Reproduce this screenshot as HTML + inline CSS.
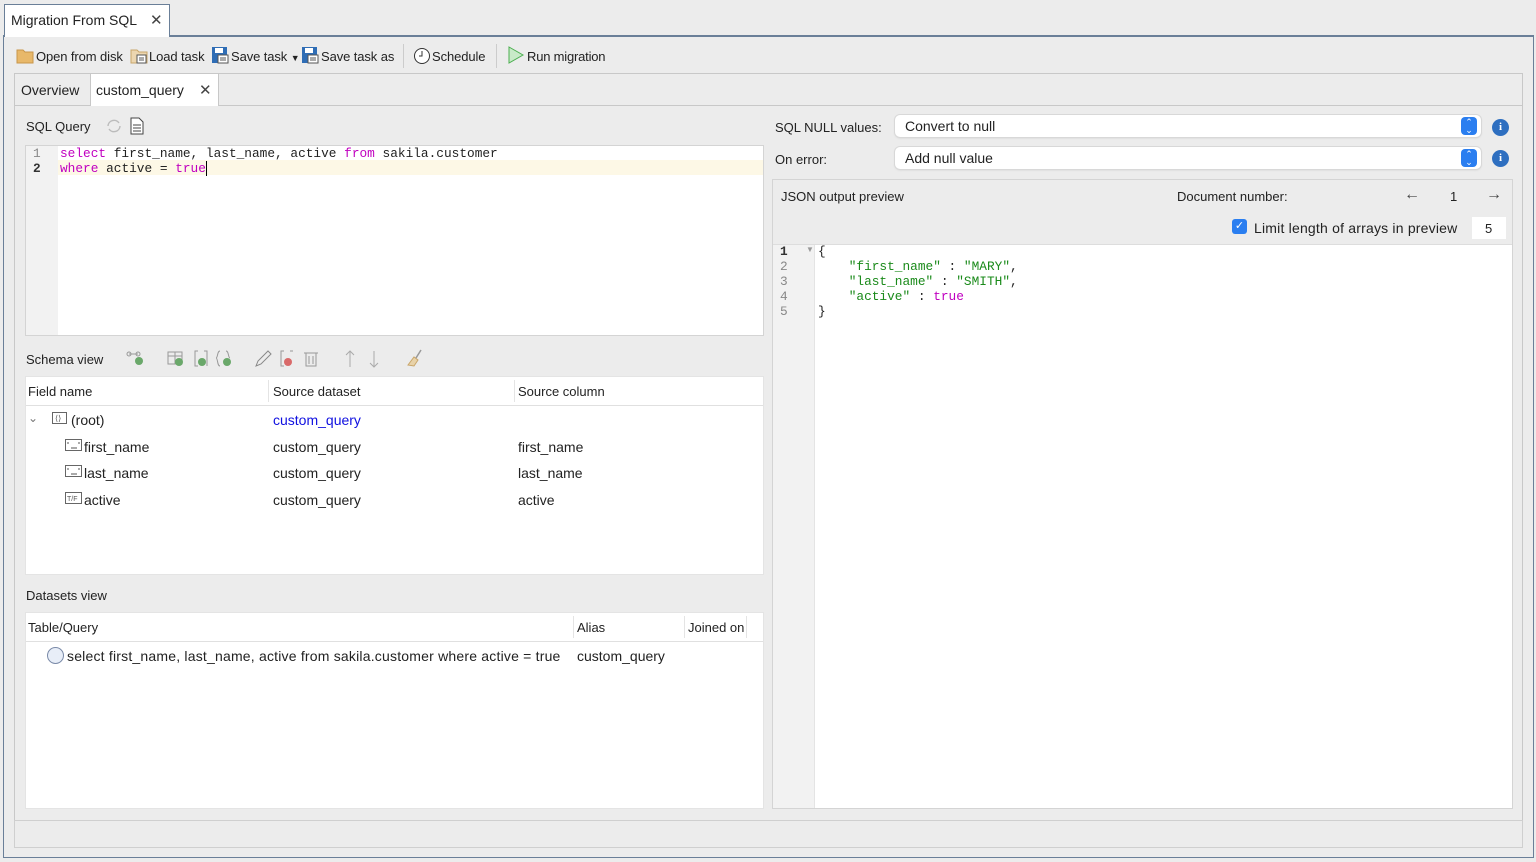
<!DOCTYPE html>
<html><head><meta charset="utf-8"><style>
*{box-sizing:border-box;margin:0;padding:0}
body{width:1536px;height:862px;background:#ececec;font-family:"Liberation Sans",sans-serif;font-size:13px;color:#222;position:relative;overflow:hidden}
.a{position:absolute}
.mono{font-family:"Liberation Mono",monospace;font-size:12.8px}
.w{background:#fff}
.t{white-space:nowrap}
.kw{color:#c000c0}
.str{color:#1a8a1a}
.gray{color:#888}
.ic{position:absolute}
</style></head><body>
<div class="a" style="left:3px;top:35px;width:1531px;height:823px;border:1px solid #6a7f98;border-top:2px solid #6a7f98"></div>
<div class="a" style="left:4px;top:4px;width:166px;height:33px;background:#fff;border:1px solid #6a7f98;border-bottom:none"></div>
<div class="a t" style="left:11px;top:12px;font-size:14px">Migration From SQL</div>
<div class="a t" style="left:150px;top:11px;font-size:15px;color:#444">✕</div>

<svg class="ic" style="left:16px;top:46px" width="18" height="18"><path d="M1 4h6l2 2h8v11H1z" fill="#e8b86a" stroke="#c9964a"/></svg>
<div class="a t" style="left:36px;top:49px;letter-spacing:-0.1px">Open from disk</div>
<svg class="ic" style="left:130px;top:46px" width="18" height="18"><path d="M1 4h6l2 2h8v11H1z" fill="#ecd6b0" stroke="#c9a66a"/><rect x="7" y="9" width="9" height="8" fill="#fff" stroke="#555"/><path d="M9 12h5M9 14h5" stroke="#555"/></svg>
<div class="a t" style="left:149px;top:49px;letter-spacing:-0.1px">Load task</div>
<svg class="ic" style="left:211px;top:46px" width="18" height="18"><rect x="1" y="1" width="15" height="16" fill="#2f6db5"/><rect x="4" y="2" width="8" height="5" fill="#fff"/><rect x="7" y="9" width="10" height="8" fill="#fff" stroke="#555"/><path d="M9 12h6M9 14h6" stroke="#555"/></svg>
<div class="a t" style="left:231px;top:49px;letter-spacing:-0.1px">Save task <span style="font-size:9px">▼</span></div>
<svg class="ic" style="left:301px;top:46px" width="18" height="18"><rect x="1" y="1" width="15" height="16" fill="#2f6db5"/><rect x="4" y="2" width="8" height="5" fill="#fff"/><rect x="7" y="9" width="10" height="8" fill="#fff" stroke="#555"/><path d="M9 12h6M9 14h6" stroke="#555"/></svg>
<div class="a t" style="left:321px;top:49px;letter-spacing:-0.1px">Save task as</div>
<div class="a" style="left:403px;top:44px;width:1px;height:24px;background:#ccc"></div>
<svg class="ic" style="left:413px;top:47px" width="18" height="18"><circle cx="9" cy="9" r="7.5" fill="#fff" stroke="#333"/><path d="M9 4v5H6" stroke="#333" fill="none"/></svg>
<div class="a t" style="left:432px;top:49px;letter-spacing:-0.1px">Schedule</div>
<div class="a" style="left:496px;top:44px;width:1px;height:24px;background:#ccc"></div>
<svg class="ic" style="left:507px;top:46px" width="18" height="18"><path d="M2 1l14 8-14 8z" fill="#c8eac8" stroke="#4caf50"/></svg>
<div class="a t" style="left:527px;top:49px;letter-spacing:-0.2px">Run migration</div>

<div class="a" style="left:14px;top:73px;width:1509px;height:748px;border:1px solid #c8c8c8"></div>
<div class="a" style="left:14px;top:820px;width:1509px;height:28px;border:1px solid #cfcfcf"></div>
<div class="a" style="left:14px;top:105px;width:1509px;height:1px;background:#c8c8c8"></div>
<div class="a" style="left:90px;top:74px;width:129px;height:32px;background:#fff;border-left:1px solid #c8c8c8;border-right:1px solid #c8c8c8"></div>
<div class="a t" style="left:21px;top:82px;font-size:14px">Overview</div>
<div class="a t" style="left:96px;top:82px;font-size:14px">custom_query</div>
<div class="a t" style="left:199px;top:81px;font-size:15px;color:#444">✕</div>

<div class="a t" style="left:26px;top:119px">SQL Query</div>
<svg class="ic" style="left:105px;top:117px" width="18" height="18"><path d="M3 9a6 6 0 0 1 11-3M15 9a6 6 0 0 1-11 3" stroke="#bbb" fill="none" stroke-width="1.4"/></svg>
<svg class="ic" style="left:129px;top:117px" width="16" height="18"><path d="M2 1h8l4 4v12H2z" fill="#fff" stroke="#444"/><path d="M4 8h8M4 11h8M4 14h8" stroke="#444"/></svg>
<div class="a w" style="left:25px;top:145px;width:739px;height:191px;border:1px solid #d4d4d4"></div>
<div class="a" style="left:26px;top:146px;width:32px;height:189px;background:#f2f2f2"></div>
<div class="a" style="left:58px;top:160px;width:705px;height:15px;background:#fdf8e6"></div>
<div class="a mono gray" style="left:33px;top:146px">1</div>
<div class="a mono" style="left:33px;top:161px;font-weight:bold;color:#333">2</div>
<div class="a mono t" style="left:60px;top:146px"><span class="kw">select</span> first_name, last_name, active <span class="kw">from</span> sakila.customer</div>
<div class="a mono t" style="left:60px;top:161px"><span class="kw">where</span> active = <span class="kw">true</span><span style="border-left:1px solid #000"></span></div>

<div class="a t" style="left:26px;top:352px">Schema view</div>
<svg class="ic" style="left:126px;top:349px" width="320" height="20" fill="none">
<path d="M3 5h9" stroke="#999"/><circle cx="3" cy="5" r="2" stroke="#999"/><circle cx="12" cy="5" r="2" stroke="#999"/><circle cx="13" cy="12" r="4" fill="#6aa86a"/>
<rect x="42" y="3" width="14" height="12" stroke="#999"/><path d="M42 7h14M49 3v12" stroke="#999"/><circle cx="53" cy="13" r="4" fill="#6aa86a"/>
<path d="M72 2h-3v15h3M78 2h3v15" stroke="#999"/><circle cx="76" cy="13" r="4" fill="#6aa86a"/>
<path d="M94 2c-3 0-2 7-4 7 2 0 1 8 4 8M100 2c3 0 2 7 4 7" stroke="#999"/><circle cx="101" cy="13" r="4" fill="#6aa86a"/>
<path d="M130 17l2-5 10-10 3 3-10 10z" stroke="#888"/>
<path d="M158 2h-3v15h3M164 2h3" stroke="#999"/><circle cx="162" cy="13" r="4" fill="#d96a6a"/>
<rect x="180" y="4" width="10" height="13" stroke="#999"/><path d="M178 4h14M183 7v8M187 7v8" stroke="#999"/>
<path d="M224 2v16M220 6l4-4 4 4" stroke="#aaa"/><path d="M248 2v16M244 14l4 4 4-4" stroke="#aaa"/>
<path d="M282 16l6-8 4 3-4 6z" fill="#e8d2a8" stroke="#c9a66a"/><path d="M290 9l5-8" stroke="#999" stroke-width="1.5"/>
</svg>
<div class="a w" style="left:25px;top:376px;width:739px;height:199px;border:1px solid #e4e4e4"></div>
<div class="a" style="left:26px;top:405px;width:737px;height:1px;background:#e0e0e0"></div>
<div class="a" style="left:268px;top:380px;width:1px;height:22px;background:#e4e4e4"></div>
<div class="a" style="left:514px;top:380px;width:1px;height:22px;background:#e4e4e4"></div>
<div class="a t" style="left:28px;top:384px">Field name</div>
<div class="a t" style="left:273px;top:384px">Source dataset</div>
<div class="a t" style="left:518px;top:384px">Source column</div>
<div class="a t" style="left:28px;top:411px;font-size:12px;color:#777">⌄</div>
<svg class="ic" style="left:52px;top:412px" width="16" height="13"><rect x=".5" y=".5" width="14" height="11" fill="#fff" stroke="#666"/><text x="3" y="9" font-size="8" fill="#555" font-family="Liberation Sans">⟨⟩</text></svg>
<div class="a t" style="left:71px;top:412px;font-size:14px">(root)</div>
<div class="a t" style="left:273px;top:412px;font-size:14px;color:#1010e0">custom_query</div>
<svg class="ic" style="left:65px;top:439px" width="18" height="13"><rect x=".5" y=".5" width="16" height="11" fill="#fff" stroke="#666"/><path d="M3 3v2M14 3v2M6 9h6" stroke="#555"/></svg>
<div class="a t" style="left:84px;top:439px;font-size:14px">first_name</div>
<div class="a t" style="left:273px;top:439px;font-size:14px">custom_query</div>
<div class="a t" style="left:518px;top:439px;font-size:14px">first_name</div>
<svg class="ic" style="left:65px;top:465px" width="18" height="13"><rect x=".5" y=".5" width="16" height="11" fill="#fff" stroke="#666"/><path d="M3 3v2M14 3v2M6 9h6" stroke="#555"/></svg>
<div class="a t" style="left:84px;top:465px;font-size:14px">last_name</div>
<div class="a t" style="left:273px;top:465px;font-size:14px">custom_query</div>
<div class="a t" style="left:518px;top:465px;font-size:14px">last_name</div>
<svg class="ic" style="left:65px;top:492px" width="18" height="13"><rect x=".5" y=".5" width="16" height="11" fill="#fff" stroke="#666"/><text x="2" y="9" font-size="7" fill="#555" font-family="Liberation Sans">T/F</text></svg>
<div class="a t" style="left:84px;top:492px;font-size:14px">active</div>
<div class="a t" style="left:273px;top:492px;font-size:14px">custom_query</div>
<div class="a t" style="left:518px;top:492px;font-size:14px">active</div>

<div class="a t" style="left:26px;top:588px">Datasets view</div>
<div class="a w" style="left:25px;top:612px;width:739px;height:197px;border:1px solid #e4e4e4"></div>
<div class="a" style="left:26px;top:641px;width:737px;height:1px;background:#e0e0e0"></div>
<div class="a" style="left:573px;top:616px;width:1px;height:22px;background:#e4e4e4"></div>
<div class="a" style="left:684px;top:616px;width:1px;height:22px;background:#e4e4e4"></div>
<div class="a" style="left:746px;top:616px;width:1px;height:22px;background:#e4e4e4"></div>
<div class="a t" style="left:28px;top:620px">Table/Query</div>
<div class="a t" style="left:577px;top:620px">Alias</div>
<div class="a t" style="left:688px;top:620px">Joined on</div>
<div class="a" style="left:47px;top:647px;width:17px;height:17px;border-radius:50%;border:1px solid #7a8aa8;background:#e8eef8"></div>
<div class="a t" style="left:67px;top:648px;font-size:14px;letter-spacing:0.2px">select first_name, last_name, active from sakila.customer where active = true</div>
<div class="a t" style="left:577px;top:648px;font-size:14px">custom_query</div>

<div class="a t" style="left:775px;top:120px">SQL NULL values:</div>
<div class="a w" style="left:895px;top:115px;width:586px;height:22px;border-radius:5px;box-shadow:0 0 0 1px #d8d8d8,0 1px 2px #ccc"></div>
<div class="a t" style="left:905px;top:118px;font-size:14px">Convert to null</div>
<div class="a" style="left:1461px;top:117px;width:16px;height:18px;border-radius:4px;background:#2a7ef0;color:#fff;font-size:9px;text-align:center;line-height:8px;padding-top:1px">⌃<br>⌄</div>
<div class="a" style="left:1492px;top:119px;width:17px;height:17px;border-radius:50%;background:#2e6fc0;color:#fff;font-size:11px;text-align:center;line-height:17px;font-family:'Liberation Serif',serif;font-weight:bold">i</div>
<div class="a t" style="left:775px;top:152px">On error:</div>
<div class="a w" style="left:895px;top:147px;width:586px;height:22px;border-radius:5px;box-shadow:0 0 0 1px #d8d8d8,0 1px 2px #ccc"></div>
<div class="a t" style="left:905px;top:150px;font-size:14px">Add null value</div>
<div class="a" style="left:1461px;top:149px;width:16px;height:18px;border-radius:4px;background:#2a7ef0;color:#fff;font-size:9px;text-align:center;line-height:8px;padding-top:1px">⌃<br>⌄</div>
<div class="a" style="left:1492px;top:150px;width:17px;height:17px;border-radius:50%;background:#2e6fc0;color:#fff;font-size:11px;text-align:center;line-height:17px;font-family:'Liberation Serif',serif;font-weight:bold">i</div>

<div class="a" style="left:772px;top:179px;width:741px;height:630px;border:1px solid #d4d4d4"></div>
<div class="a t" style="left:781px;top:189px">JSON output preview</div>
<div class="a t" style="left:1177px;top:189px">Document number:</div>
<div class="a t" style="left:1404px;top:186px;font-size:16px;color:#444">←</div>
<div class="a t" style="left:1450px;top:189px">1</div>
<div class="a t" style="left:1486px;top:186px;font-size:16px;color:#444">→</div>
<div class="a" style="left:1232px;top:219px;width:15px;height:15px;border-radius:3px;background:#2a7ef0;color:#fff;font-size:11px;text-align:center;line-height:15px">✓</div>
<div class="a t" style="left:1254px;top:220px;font-size:14px;letter-spacing:0.2px">Limit length of arrays in preview</div>
<div class="a w" style="left:1472px;top:217px;width:34px;height:22px"></div>
<div class="a t" style="left:1485px;top:221px">5</div>
<div class="a w" style="left:773px;top:244px;width:739px;height:564px;border-top:1px solid #ddd"></div>
<div class="a" style="left:773px;top:245px;width:42px;height:563px;background:#f2f2f2;border-right:1px solid #e4e4e4"></div>
<div class="a mono" style="left:780px;top:244px;line-height:15px;color:#888"><span style="color:#333;font-weight:bold">1</span><br>2<br>3<br>4<br>5</div>
<div class="a" style="left:806px;top:245px;font-size:8px;color:#999">▼</div>
<div class="a mono t" style="left:818px;top:244px;line-height:15px">{<br>&nbsp;&nbsp;&nbsp;&nbsp;<span class="str">"first_name"</span> : <span class="str">"MARY"</span>,<br>&nbsp;&nbsp;&nbsp;&nbsp;<span class="str">"last_name"</span> : <span class="str">"SMITH"</span>,<br>&nbsp;&nbsp;&nbsp;&nbsp;<span class="str">"active"</span> : <span class="kw">true</span><br>}</div>
</body></html>
